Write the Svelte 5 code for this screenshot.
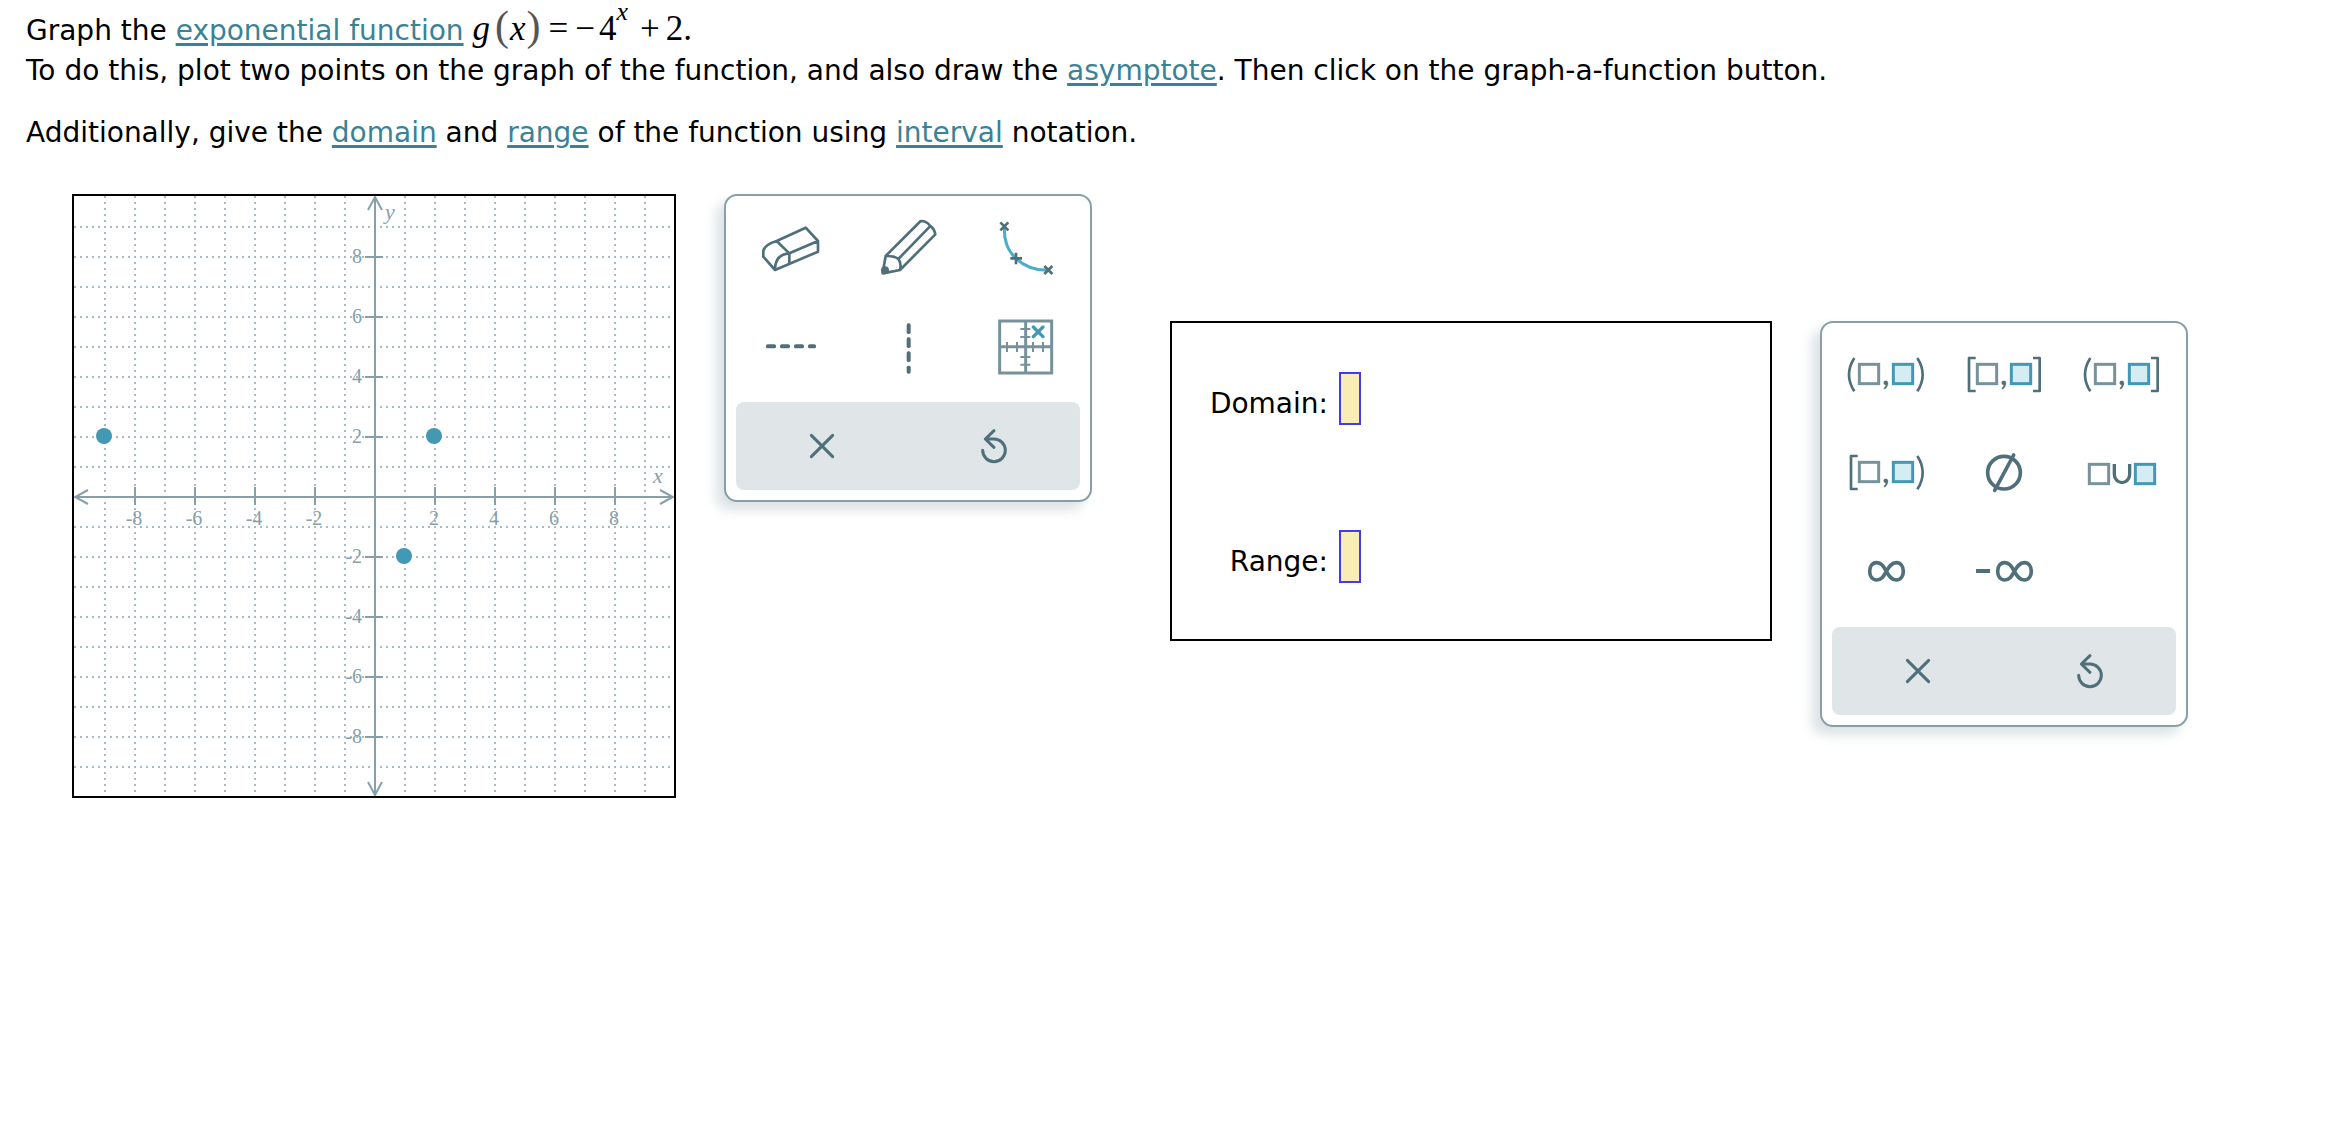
<script lang="ts">
/**
 * GraphQuestion - graph an exponential function and give its domain and range
 */

interface Point {
  x: number;
  y: number;
}

// Graph geometry: 30 units per step, origin in the middle of the plot
const STEP = 30;
const ORIGIN = 301;
const SIZE = 600;

const gridSteps = Array.from({ length: 19 }, (_, i) => i - 9).filter((n) => n !== 0);
const tickSteps = gridSteps.filter((n) => n % 2 === 0);

const points: Point[] = [
  { x: -9, y: 2 },
  { x: 2, y: 2 },
  { x: 1, y: -2 }
];

const toX = (n: number) => ORIGIN + n * STEP;
const toY = (n: number) => ORIGIN - n * STEP;

const intervals = [
  { label: 'Open interval', open: '(', close: ')' },
  { label: 'Closed interval', open: '[', close: ']' },
  { label: 'Left-open interval', open: '(', close: ']' },
  { label: 'Right-open interval', open: '[', close: ')' }
];

const fields = [
  { id: 'domain', label: 'Domain:' },
  { id: 'range', label: 'Range:' }
];

let answers: Record<string, string> = $state({ domain: '', range: '' });

function clearAnswers() {
  answers = { domain: '', range: '' };
}
</script>

{#snippet footer(onClear?: () => void)}
  <div class="panel-footer">
    <button type="button" aria-label="Clear" onclick={onClear}>
      <svg class="small-icon" viewBox="0 0 120 120">
        <path d="M28 28L92 92M92 28L28 92" />
      </svg>
    </button>
    <button type="button" aria-label="Undo">
      <svg class="small-icon" viewBox="0 0 120 120">
        <path d="M26 73A34 34 0 1 0 60 39H36M60 14L34 39L60 64" />
      </svg>
    </button>
  </div>
{/snippet}

{#snippet infinity()}
  <path
    class="heavy"
    d="M121 97C112 81 106 71 92 71C64 71 64 123 92 123C106 123 112 113 121 97C130 81 137 71 151 71C179 71 179 123 151 123C137 123 130 113 121 97Z"
  />
{/snippet}

<main>
  <section class="prompt">
    <p>
      Graph the <a href="#exponential">exponential function</a>
      <span class="math"
        ><i class="name">g</i><span class="paren">(</span><i>x</i><span class="paren">)</span><span class="op"
          >=</span
        ><span class="op">−</span><span class="base">4</span><sup>x</sup><span class="plus">+</span>2.</span
      >
    </p>
    <p>
      To do this, plot two points on the graph of the function, and also draw the
      <a href="#asymptote">asymptote</a>. Then click on the graph-a-function button.
    </p>
    <p class="spaced">
      Additionally, give the <a href="#domain-help">domain</a> and <a href="#range-help">range</a> of the
      function using <a href="#interval">interval</a> notation.
    </p>
  </section>

  <div class="workspace">
    <svg class="graph" viewBox="0 0 {SIZE} {SIZE}" role="img" aria-label="Coordinate grid">
      <!-- Grid -->
      {#each gridSteps as n (n)}
        <path class="grid" d="M{toX(n)} 0V{SIZE}M0 {toY(n)}H{SIZE}" />
      {/each}

      <!-- Axes -->
      <path class="axis" d="M{ORIGIN} 1V{SIZE - 1}M1 {ORIGIN}H{SIZE - 1}" />
      <path class="axis" d="M294 14L301 1L308 14M294 586L301 599L308 586" />
      <path class="axis" d="M14 294L1 301L14 308M586 294L599 301L586 308" />
      {#each tickSteps as n (n)}
        <path class="axis" d="M{toX(n)} 291V309M291 {toY(n)}H309" />
        <text x={toX(n) - 1} y="329" text-anchor="middle">{n}</text>
        <text x="288" y={toY(n) + 6} text-anchor="end">{n}</text>
      {/each}
      <text class="axis-name" x="311" y="23">y</text>
      <text class="axis-name" x="579" y="287">x</text>

      {#each points as p}
        <circle cx={toX(p.x) - 1} cy={toY(p.y) - 1} r="8" />
      {/each}
    </svg>

    <!-- Drawing tools -->
    <div class="panel tools">
      <div class="panel-grid">
        <button type="button" aria-label="Eraser">
          <svg class="icon" viewBox="0 0 192 192">
            <path
              d="M56 75L143 35L180 75V107L51 162L16 122V104Q20 86 56 75ZM56 75L94 112V142M94 112L180 75M94 112C64 114 51 130 51 162"
            />
          </svg>
        </button>
        <button type="button" aria-label="Pencil">
          <svg class="icon" viewBox="0 0 192 192">
            <path
              d="M29 120L134 15Q152 15 162 29Q176 40 178 55L72 162L20 172ZM29 120Q56 119 67 129Q77 140 72 162M67 129L162 31"
            />
            <circle class="tip" cx="27" cy="163" r="12" />
          </svg>
        </button>
        <button type="button" aria-label="Graph a function">
          <svg class="icon" viewBox="0 0 192 192">
            <path class="curve" d="M31 36C30 75 43 107 66 127C93 154 128 162 158 163" />
            <path d="M19 19L43 43M43 19L19 43M151 150L175 174M175 150L151 174M66 110V145M49 127H84" />
          </svg>
        </button>
        <button type="button" aria-label="Horizontal asymptote">
          <svg class="icon solid" viewBox="0 0 192 192">
            <rect x="24" y="91" width="30" height="12" rx="5" />
            <rect x="66" y="91" width="30" height="12" rx="5" />
            <rect x="108" y="91" width="30" height="12" rx="5" />
            <rect x="150" y="91" width="24" height="12" rx="5" />
          </svg>
        </button>
        <button type="button" aria-label="Vertical asymptote">
          <svg class="icon solid" viewBox="0 0 192 192">
            <rect x="92" y="28" width="12" height="32" rx="5" />
            <rect x="92" y="70" width="12" height="32" rx="5" />
            <rect x="92" y="112" width="12" height="32" rx="5" />
            <rect x="92" y="155" width="12" height="24" rx="5" />
          </svg>
        </button>
        <button type="button" aria-label="Plot a point">
          <svg class="icon" viewBox="0 0 192 192">
            <path class="box" d="M17 21H173V177H17ZM95 21V177M17 98H173" />
            <path
              class="box-ticks"
              d="M79 45H109M79 69H109M79 129H109M79 152H109M39 84V114M69 84V114M117 84V114M147 84V114"
            />
            <path class="mark" d="M118 39L147 68M147 39L118 68" />
          </svg>
        </button>
      </div>
      {@render footer()}
    </div>

    <!-- Answers -->
    <form class="answers lowered">
      {#each fields as field (field.id)}
        <label for={field.id}>{field.label}</label>
        <input id={field.id} type="text" bind:value={answers[field.id]} />
      {/each}
    </form>

    <!-- Interval symbols -->
    <div class="panel symbols lowered">
      <div class="panel-grid">
        {#each intervals as item (item.label)}
          <button type="button" aria-label={item.label}>
            <svg class="wide-icon" viewBox="0 0 240 192">
              <path d={item.open === '(' ? 'M25 45Q-7 95 25 145' : 'M35 45H15V144H35'} />
              <rect class="slot" x="40" y="64" width="58" height="58" />
              <text x="119" y="126" text-anchor="middle">,</text>
              <rect class="slot active" x="142" y="64" width="58" height="58" />
              <path d={item.close === ')' ? 'M214 45Q246 95 214 145' : 'M207 45H227V144H207'} />
            </svg>
          </button>
        {/each}
        <button type="button" aria-label="Empty set">
          <svg class="wide-icon" viewBox="0 0 240 192">
            <circle class="heavy" cx="120" cy="95" r="49" />
            <path class="heavy" d="M149 42L92 148" />
          </svg>
        </button>
        <button type="button" aria-label="Union">
          <svg class="wide-icon" viewBox="0 0 240 192">
            <rect class="slot" x="22" y="70" width="58" height="58" />
            <path class="union" d="M97 69V100A23 25 0 0 0 143 100V69" />
            <rect class="slot active" x="160" y="70" width="58" height="58" />
          </svg>
        </button>
        <button type="button" aria-label="Infinity">
          <svg class="wide-icon" viewBox="0 0 240 192">{@render infinity()}</svg>
        </button>
        <button type="button" aria-label="Negative infinity">
          <svg class="wide-icon" viewBox="0 0 240 192">
            <rect class="minus" x="36" y="90" width="42" height="12" />
            <g transform="translate(30 0)">{@render infinity()}</g>
          </svg>
        </button>
      </div>
      {@render footer(clearAnswers)}
    </div>
  </div>
</main>

<style>
  :global(body) {
    background: #fff;
  }

  main {
    --ink: #4f6f7a;
    --muted: #78929c;
    --line: #879fa9;
    --accent: #4399b3;
    padding: 11px 26px;
    font-family: Verdana, 'DejaVu Sans', sans-serif;
    font-size: 28px;
    line-height: 40px;
    color: #000;
  }

  /* Prompt */
  .prompt p {
    margin: 0;
  }

  .prompt .spaced {
    margin-top: 22px;
  }

  a {
    color: #3b8296;
    text-decoration-thickness: 3px;
    text-underline-offset: 3px;
  }

  .math {
    font-family: 'Liberation Serif', 'Times New Roman', serif;
    font-size: 35px;
    line-height: 1;
  }

  .name {
    margin-right: 4px;
  }

  .paren {
    margin: 0 1px;
    font-size: 42px;
    line-height: 0;
    color: #555;
  }

  .op {
    margin-left: 7px;
  }

  .base {
    margin-left: 4px;
  }

  .plus {
    margin: 0 6px 0 12px;
  }

  sup {
    font-size: 26px;
    font-style: italic;
    line-height: 0;
    vertical-align: 20px;
  }

  /* Workspace */
  .workspace {
    display: flex;
    flex-wrap: wrap;
    align-items: flex-start;
    margin: 41px 0 0 46px;
  }

  .graph {
    box-sizing: border-box;
    flex: 0 1 604px;
    min-width: 0;
    border: 2px solid #000;
  }

  .grid {
    stroke: #a9bbc2;
    stroke-width: 2;
    stroke-dasharray: 2 4;
    fill: none;
  }

  .axis {
    stroke: var(--line);
    stroke-width: 2;
    fill: none;
  }

  .graph text {
    font-family: 'Liberation Serif', 'Times New Roman', serif;
    font-size: 20px;
    fill: var(--line);
  }

  .graph .axis-name {
    font-size: 22px;
    font-style: italic;
  }

  .graph circle {
    fill: var(--accent);
  }

  /* Tool panels */
  .panel {
    box-sizing: border-box;
    flex: 0 0 368px;
    padding: 3px 10px 10px;
    border: 2px solid var(--line);
    border-radius: 13px;
    background: #fff;
    box-shadow: -8px 8px 12px rgba(79, 111, 122, 0.2);
  }

  .tools {
    margin: 0 78px 0 48px;
  }

  .symbols {
    margin-left: 48px;
  }

  .lowered {
    margin-top: 127px;
  }

  .panel-grid {
    display: grid;
    grid-template-columns: repeat(3, 1fr);
    grid-auto-rows: 98px;
    margin: 0 -5px 7px;
  }

  .panel-footer {
    display: grid;
    grid-template-columns: 1fr 1fr;
    height: 88px;
    border-radius: 8px;
    background: #e0e5e8;
  }

  button {
    display: flex;
    align-items: center;
    justify-content: center;
    padding: 0;
    border: 0;
    background: none;
    cursor: pointer;
  }

  button svg {
    fill: none;
    stroke: var(--ink);
    stroke-width: 8;
    stroke-linejoin: round;
  }

  .icon {
    width: 64px;
    height: 64px;
  }

  .wide-icon {
    width: 80px;
    height: 64px;
  }

  button .small-icon {
    width: 40px;
    height: 40px;
    stroke-width: 9;
    stroke-linecap: round;
  }

  .solid rect,
  .tip,
  .minus {
    fill: var(--ink);
    stroke: none;
  }

  .curve {
    stroke: #4dacc8;
    stroke-width: 9;
  }

  .box {
    stroke: var(--muted);
    stroke-width: 9;
    stroke-linejoin: miter;
  }

  .box-ticks {
    stroke: var(--muted);
    stroke-width: 6;
  }

  .mark {
    stroke: var(--accent);
    stroke-width: 10;
    stroke-linecap: round;
  }

  .slot {
    stroke: var(--muted);
    stroke-width: 9;
    stroke-linejoin: miter;
  }

  .active {
    fill: #d4edf3;
    stroke: var(--accent);
  }

  .heavy {
    stroke-width: 11;
    stroke-linecap: round;
  }

  .union {
    stroke-width: 10;
  }

  .wide-icon text {
    font-family: Lato, sans-serif;
    font-size: 90px;
    font-weight: 700;
    fill: var(--ink);
    stroke: none;
  }

  /* Answers */
  .answers {
    box-sizing: border-box;
    display: grid;
    grid-template-columns: 156px 22px;
    grid-auto-rows: 53px;
    gap: 105px 11px;
    flex: 0 1 602px;
    padding: 49px 0 56px;
    border: 2px solid #000;
  }

  .answers label {
    line-height: 63px;
    text-align: right;
  }

  .answers input {
    box-sizing: border-box;
    width: 22px;
    height: 53px;
    padding: 0;
    border: 2px solid #3f3ce8;
    border-radius: 0;
    background: #faecb6;
    font: inherit;
    font-size: 20px;
    outline: 0;
  }
</style>
